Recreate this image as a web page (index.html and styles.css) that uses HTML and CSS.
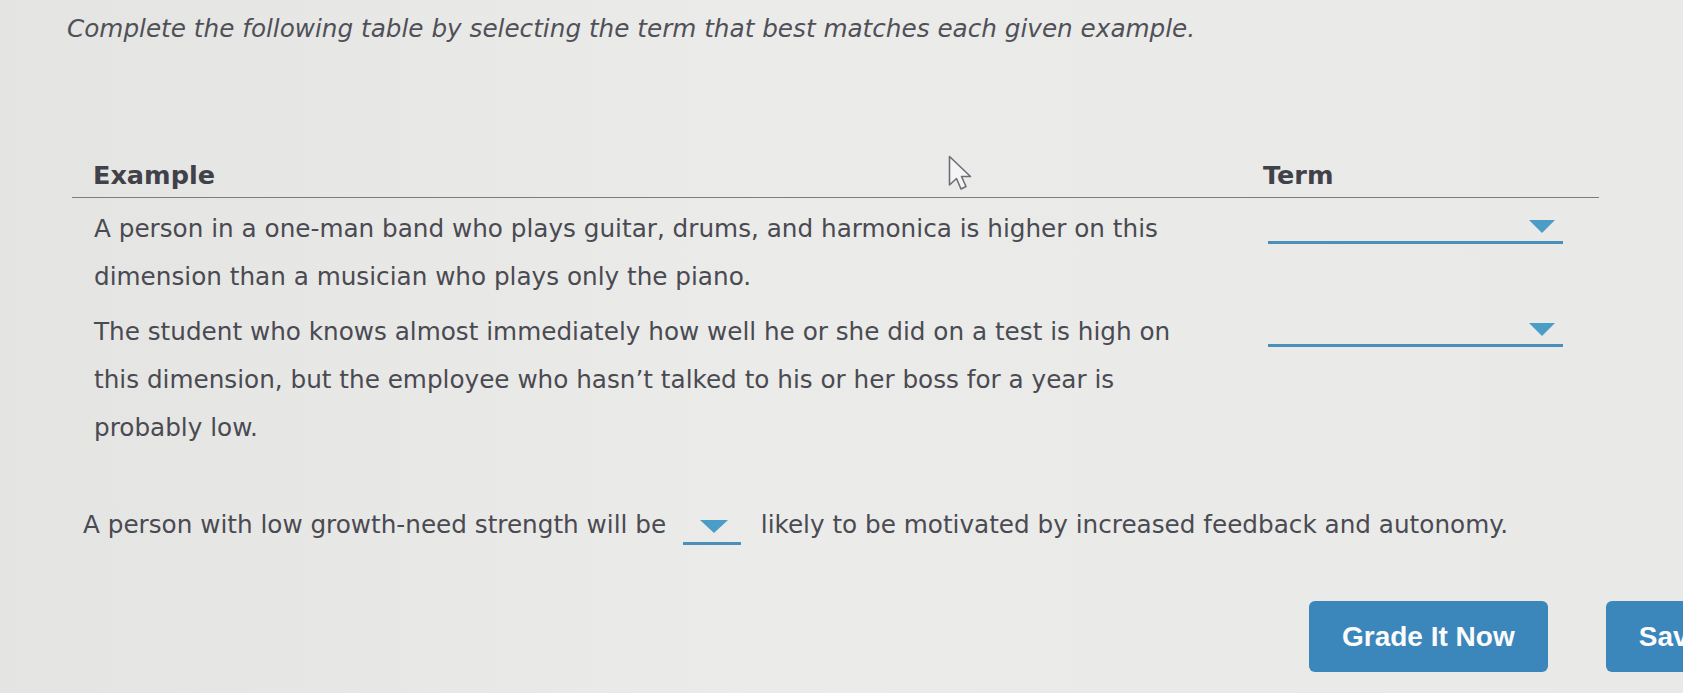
FILE: index.html
```html
<!DOCTYPE html>
<html lang="en">

<head>
    <meta charset="utf-8">
    <meta name="viewport" content="width=device-width, initial-scale=1.0">
    <title>Matching table</title>
    <link rel="stylesheet" href="styles.css">
</head>

<body>

    <main class="page">
        <p class="prompt">Complete the following table by selecting the term that best matches each given example.</p>

        <table class="match">
            <thead>
                <tr>
                    <th class="example">Example</th>
                    <th class="term">Term</th>
                </tr>
            </thead>
            <tbody>
                <tr>
                    <td class="example">A person in a one-man band who plays guitar, drums, and harmonica is higher on this dimension than a musician who plays only the piano.</td>
                    <td class="term"><span class="pick wide"><span class="caret"></span></span></td>
                </tr>
                <tr>
                    <td class="example">The student who knows almost immediately how well he or she did on a test is high on this dimension, but the employee who hasn&rsquo;t talked to his or her boss for a year is probably low.</td>
                    <td class="term"><span class="pick wide"><span class="caret"></span></span></td>
                </tr>
            </tbody>
        </table>

        <p class="sentence">A person with low growth-need strength will be <span class="pick short"><span class="caret"></span></span> likely to be motivated by increased feedback and autonomy.</p>

        <div class="actions">
            <button class="btn">Grade It Now</button>
            <button class="btn">Save &amp; Continue</button>
        </div>
    </main>

    <svg class="cursor" width="24" height="37" viewBox="0 0 24 37">
        <path d="M1.5 1.5 L1.5 30 L8.5 23.5 L13 34 L18 31.5 L13.5 21.5 L22.5 21.5 Z" fill="#f4f4f4" stroke="#6e6e78" stroke-width="1.6" stroke-linejoin="round" />
    </svg>

</body></html>
```

FILE: styles.css
```css
html,
body {
    margin: 0;
    height: 100%;
    overflow: hidden;
}

body {
    background: linear-gradient(to right, #e4e4e2, #ebebe9 45%, #e9e9e7);
    color: #4a4a52;
    font-family: "DejaVu Sans", Verdana, sans-serif;
    font-size: 24.7px;
}

.page {
    padding: 14px 0 0 67px;
}

.prompt {
    margin: 0;
    font-style: italic;
    line-height: 30px;
    color: #505058;
}

.match {
    border-collapse: collapse;
    width: 1527px;
    margin: 116px 0 0 5px;
}

.match th {
    text-align: left;
    font-weight: bold;
    font-size: 25.5px;
    line-height: 30px;
    padding: 0 0 7px 0;
    border-bottom: 1px solid #7c7c82;
    color: #414149;
}

.match th.example {
    padding-left: 21px;
}

.match td {
    vertical-align: top;
    line-height: 48px;
    padding: 7px 0 0 0;
}

.match td.example {
    width: 1100px;
    padding-left: 22px;
    padding-right: 69px;
}

.pick {
    display: inline-block;
    position: relative;
    height: 36px;
    border-bottom: 3px solid #4b8fbb;
    vertical-align: top;
}

.pick.wide {
    width: 295px;
    margin-left: 5px;
}

.pick.short {
    width: 58px;
    height: 38px;
    margin: 0 12px 0 9px;
    vertical-align: -12px;
}

.caret {
    position: absolute;
    right: 8px;
    top: 15px;
    width: 0;
    height: 0;
    border-left: 13px solid transparent;
    border-right: 13px solid transparent;
    border-top: 13px solid #4b9cc6;
}

.pick.short .caret {
    right: 13px;
    top: 16px;
    border-left-width: 14px;
    border-right-width: 14px;
}

.sentence {
    margin: 49px 0 0 16px;
    line-height: 48px;
}

.actions {
    display: flex;
    gap: 58px;
    margin-top: 52px;
    padding-left: 1242px;
}

.btn {
    flex-shrink: 0;
    height: 71px;
    padding: 0 33px;
    border: none;
    border-radius: 6px;
    background-color: #3b86bb;
    color: #fbfbfb;
    font-family: "Liberation Sans", Arial, sans-serif;
    font-weight: bold;
    font-size: 28px;
    white-space: nowrap;
}

.btn:hover {
    cursor: pointer;
}

.cursor {
    position: absolute;
    left: 948px;
    top: 155px;
}
```
